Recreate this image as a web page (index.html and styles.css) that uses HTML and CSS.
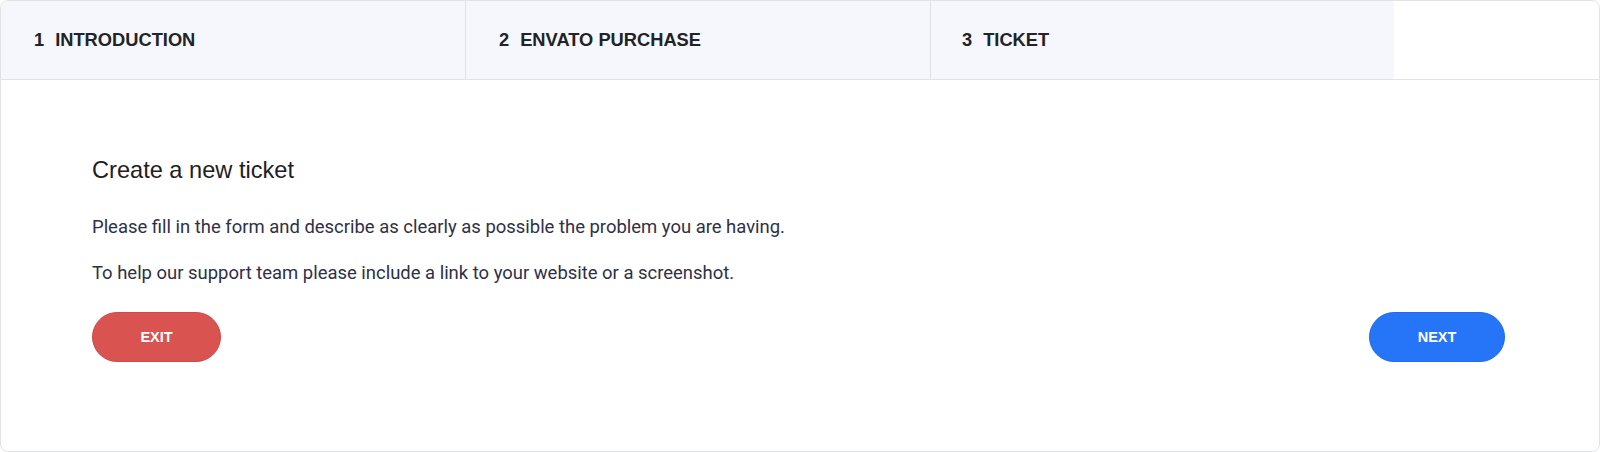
FILE: index.html
```html
<!DOCTYPE html>
<html lang="en">
<head>
<meta charset="utf-8">
<title>Create a new ticket</title>
<link rel="stylesheet" href="styles.css">
</head>
<body>
<div class="wizard">
  <div class="steps">
    <div class="step"><span class="num">1</span>INTRODUCTION</div>
    <div class="step"><span class="num">2</span>ENVATO PURCHASE</div>
    <div class="step"><span class="num">3</span>TICKET</div>
  </div>
  <div class="content">
    <h2 class="title">Create a new ticket</h2>
    <p class="text first">Please fill in the form and describe as clearly as possible the problem you are having.</p>
    <p class="text">To help our support team please include a link to your website or a screenshot.</p>
    <div class="actions">
      <button class="btn btn-exit">EXIT</button>
      <button class="btn btn-next">NEXT</button>
    </div>
  </div>
</div>
</body>
</html>
```
FILE: styles.css
```css
* { box-sizing: border-box; }
html, body { margin: 0; padding: 0; background: #ffffff; }
body { font-family: "Liberation Sans", Arial, sans-serif; }

.wizard {
  width: 1600px;
  height: 452px;
  border: 1px solid #e2e3e7;
  border-radius: 8px;
  overflow: hidden;
  background: #fff;
}

.steps {
  display: flex;
  height: 79px;
  border-bottom: 1px solid #e1e3e9;
}

.step {
  width: 465px;
  flex: 0 0 465px;
  display: flex;
  align-items: center;
  padding-left: 33px;
  background: #f6f7fc;
  border-right: 1px solid #e0e2e8;
  font-weight: bold;
  font-size: 18.3px;
  color: #222326;
}
.step:last-child { flex-basis: 463px; width: 463px; border-right: 0; padding-left: 31px; }

.num { margin-right: 11px; }

.content {
  padding: 75px 94px 0 91px;
}

.title {
  margin: 0;
  font-family: "Liberation Sans", Arial, sans-serif;
  font-weight: normal;
  font-size: 23.6px;
  line-height: 30px;
  color: #1f2024;
}

.text {
  margin: 20px 0 0;
  font-family: Roboto, "Liberation Sans", sans-serif;
  font-size: 18.45px;
  line-height: 26px;
  color: #2e3047;
}
.text.first { margin-top: 29px; }

.actions {
  display: flex;
  justify-content: space-between;
  margin-top: 26px;
}

.btn {
  height: 50px;
  border-radius: 25px;
  font-family: "Liberation Sans", Arial, sans-serif;
  font-weight: bold;
  font-size: 14.5px;
  color: #fff;
  padding: 0;
  cursor: pointer;
}
.btn-exit {
  width: 129px;
  background: #d95350;
  border: 1px solid #cf4a47;
}
.btn-next {
  width: 136px;
  background: #2674f8;
  border: 1px solid #1f6cf0;
}
```
